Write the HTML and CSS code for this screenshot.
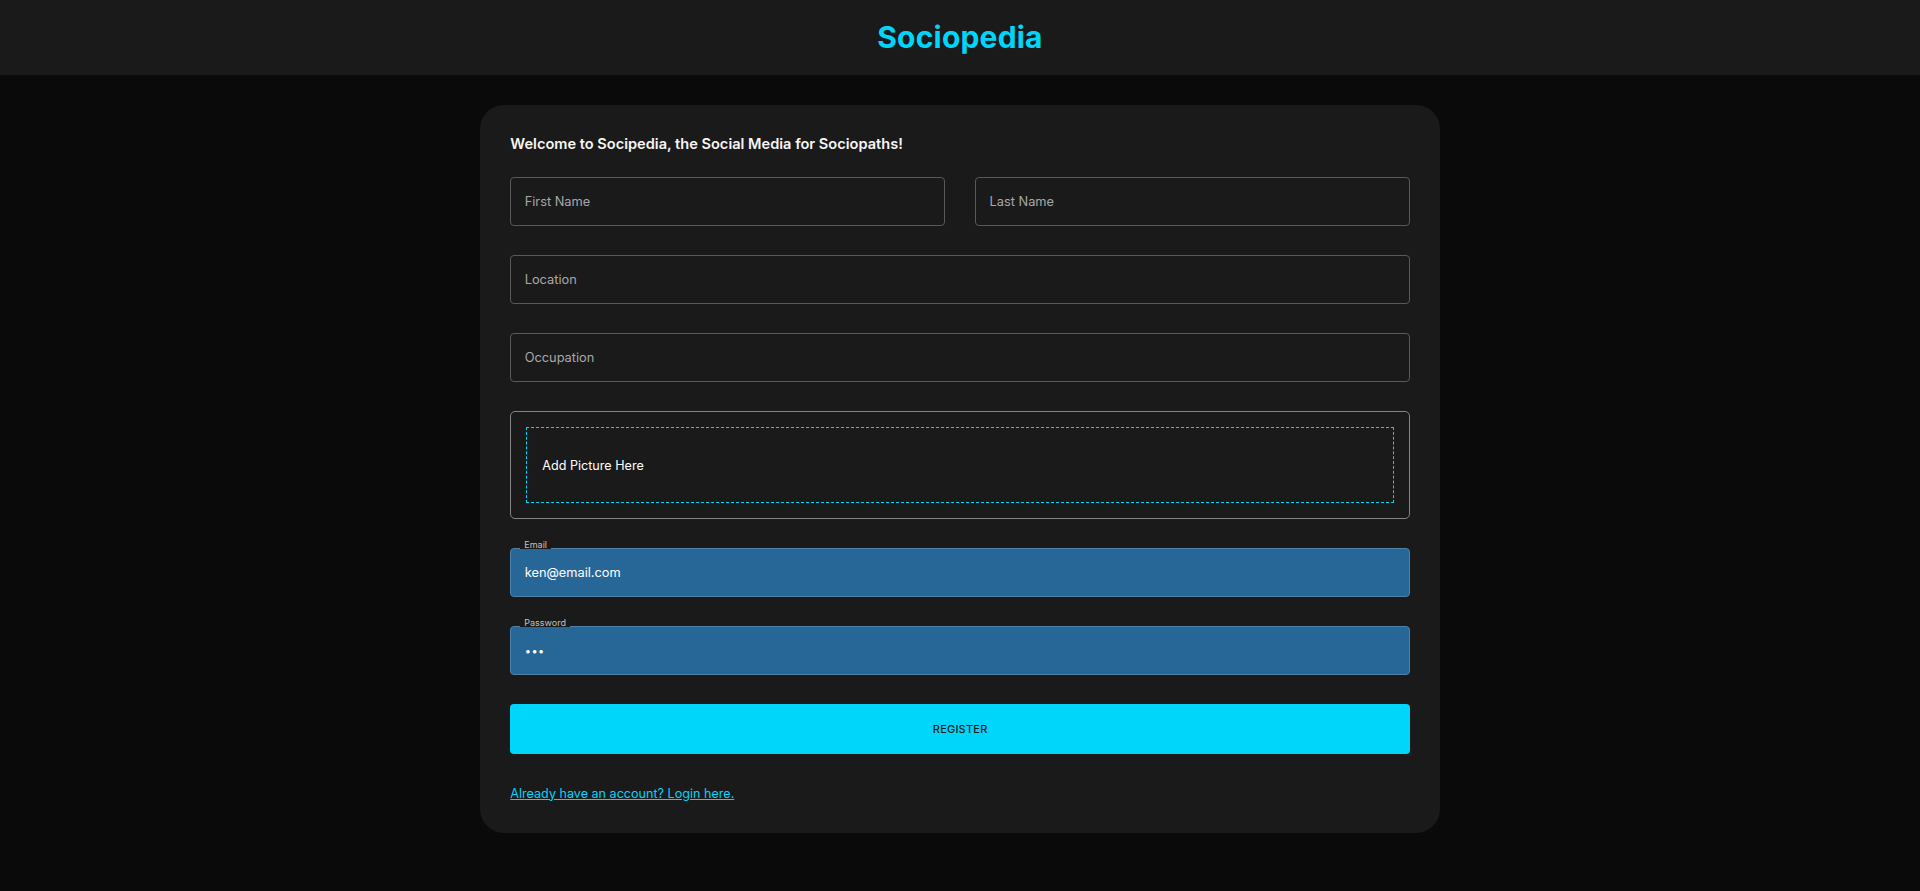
FILE: index.html
```html
<!DOCTYPE html>
<html lang="en">
<head>
<meta charset="utf-8">
<title>Sociopedia</title>
<link rel="stylesheet" href="styles.css">
</head>
<body>
<header class="topbar">
  <h1 class="brand">Sociopedia</h1>
</header>
<main class="page">
  <section class="card">
    <h2 class="welcome">Welcome to Socipedia, the Social Media for Sociopaths!</h2>
    <form class="form">
      <div class="field"><span class="placeholder">First Name</span></div>
      <div class="field"><span class="placeholder">Last Name</span></div>
      <div class="field wide"><span class="placeholder">Location</span></div>
      <div class="field wide"><span class="placeholder">Occupation</span></div>
      <div class="picture wide">
        <div class="dropzone"><p class="drop-text">Add Picture Here</p></div>
      </div>
      <div class="field filled wide">
        <span class="float">Email</span>
        <span class="value">ken@email.com</span>
      </div>
      <div class="field filled wide">
        <span class="float">Password</span>
        <span class="value dots">•••</span>
      </div>
    </form>
    <button class="register" type="button">Register</button>
    <a class="switch" href="#">Already have an account? Login here.</a>
  </section>
</main>
</body>
</html>
```

FILE: styles.css
```css
* { box-sizing: border-box; }

html, body {
  margin: 0;
  padding: 0;
}

body {
  background: #0a0a0a;
  font-family: Inter, "Liberation Sans", sans-serif;
  color: #e0e0e0;
  min-height: 891px;
}

.topbar {
  background: #1a1a1a;
  height: 74.7px;
  display: flex;
  align-items: center;
  justify-content: center;
}

.brand {
  margin: 0;
  font-size: 30px;
  font-weight: 700;
  color: #00d5fa;
  line-height: 1;
  letter-spacing: 0.2px;
}

.page {
  padding-top: 30px;
}

.card {
  width: 960px;
  margin: 0 auto;
  background: #1a1a1a;
  border-radius: 24px;
  padding: 30px 30px 30.3px 30.3px;
  display: flex;
  flex-direction: column;
}

.welcome {
  margin: 0 0 23.6px;
  font-size: 14.6px;
  font-weight: 600;
  line-height: 19px;
  color: #f5f5f5;
}

.form {
  display: grid;
  grid-template-columns: 1fr 1fr;
  gap: 29.6px 30px;
}

.wide { grid-column: span 2; }

.field {
  position: relative;
  height: 48.4px;
  border: 1px solid #595959;
  border-radius: 4px;
  display: flex;
  align-items: center;
  padding: 1px 13.4px 0;
  font-size: 12.8px;
}

.placeholder { color: #a8a8a8; }

.picture {
  height: 107.4px;
  border: 1px solid #858585;
  border-radius: 5px;
  padding: 15px;
}

.dropzone {
  height: 76px;
  border: 1px dashed #00d5fa;
  padding: 0 15px;
  display: flex;
  align-items: center;
}

.drop-text {
  margin: 0;
  font-size: 12.6px;
  color: #ffffff;
}

.field.filled {
  background: #266798;
  border-color: #4f82aa;
}

.value { color: #ffffff; font-size: 12.8px; }
.dots { font-size: 11px; letter-spacing: 0.5px; }

.float {
  position: absolute;
  top: -9px;
  left: 9px;
  padding: 0 4px;
  font-size: 9px;
  line-height: 9px;
  color: #c2c2c2;
  background: #1a1a1a;
}

.register {
  margin: 29.7px 0 0;
  height: 49.7px;
  border: none;
  border-radius: 4px;
  background: #00d5fa;
  color: #1a1a1a;
  font-family: Inter, "Liberation Sans", sans-serif;
  font-size: 11px;
  font-weight: 500;
  text-transform: uppercase;
  letter-spacing: 0.2px;
}

.switch {
  margin-top: 30.7px;
  align-self: flex-start;
  font-size: 12.6px;
  line-height: 18px;
  color: #00d5fa;
  text-decoration: underline;
}
```
